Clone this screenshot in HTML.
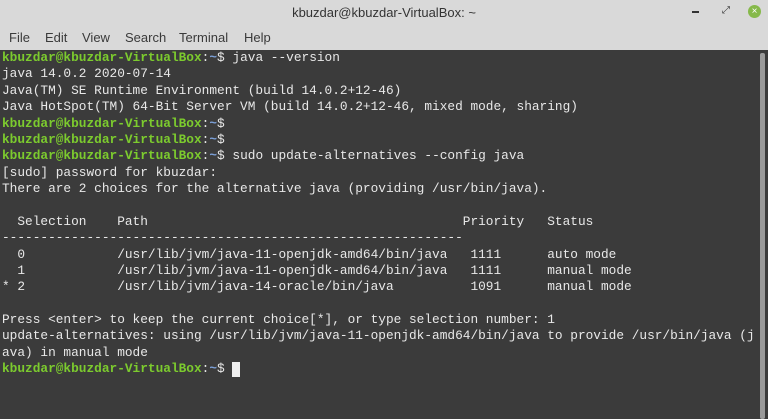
<!DOCTYPE html>
<html><head><style>
html,body{margin:0;padding:0;width:768px;height:419px;overflow:hidden;background:#3b3b3b}
#title{position:absolute;left:0;top:0;width:768px;height:25px;background:#d9d9d9;font:13px "Liberation Sans",sans-serif;color:#333}
#title .t{position:absolute;left:0;width:768px;top:5px;text-align:center}
#menu{position:absolute;left:0;top:25px;width:768px;height:25px;background:#d9d9d9;font:13px "Liberation Sans",sans-serif;color:#3a3a3a}
#menu span{position:absolute;top:5px}
#term{position:absolute;left:2px;top:50px;font:12.8px/16.37px "Liberation Mono",monospace;color:#e8e8e8;white-space:pre}
.g{color:#7ccb2e;font-weight:bold}.b{color:#7b9fd6;font-weight:bold}
#sb{position:absolute;left:760px;top:53px;width:5px;height:366px;background:#9a9a9a;border-radius:2px}
#cur{position:absolute;left:232px;top:362px;width:8px;height:15px;background:#eee}
</style></head><body>
<div id="title"><div class="t">kbuzdar@kbuzdar-VirtualBox: ~</div>
<div style="position:absolute;left:692px;top:11px;width:7px;height:2px;background:#333"></div>
<div style="position:absolute;left:722px;top:7px;width:8px;height:8px;font-size:10px;line-height:8px;color:#333">⤢</div>
<div style="position:absolute;left:748px;top:5px;width:13px;height:13px;border-radius:50%;background:#86b94a;color:#fff;font-size:10px;line-height:13px;text-align:center">×</div>
</div>
<div id="menu"><span style="left:9px">File</span><span style="left:45px">Edit</span><span style="left:82px">View</span><span style="left:125px">Search</span><span style="left:179px">Terminal</span><span style="left:244px">Help</span></div>
<div id="term"><span class="g">kbuzdar@kbuzdar-VirtualBox</span>:<span class="b">~</span>$ java --version
java 14.0.2 2020-07-14
Java(TM) SE Runtime Environment (build 14.0.2+12-46)
Java HotSpot(TM) 64-Bit Server VM (build 14.0.2+12-46, mixed mode, sharing)
<span class="g">kbuzdar@kbuzdar-VirtualBox</span>:<span class="b">~</span>$
<span class="g">kbuzdar@kbuzdar-VirtualBox</span>:<span class="b">~</span>$
<span class="g">kbuzdar@kbuzdar-VirtualBox</span>:<span class="b">~</span>$ sudo update-alternatives --config java
[sudo] password for kbuzdar:
There are 2 choices for the alternative java (providing /usr/bin/java).

  Selection    Path                                         Priority   Status
------------------------------------------------------------
  0            /usr/lib/jvm/java-11-openjdk-amd64/bin/java   1111      auto mode
  1            /usr/lib/jvm/java-11-openjdk-amd64/bin/java   1111      manual mode
* 2            /usr/lib/jvm/java-14-oracle/bin/java          1091      manual mode

Press &lt;enter&gt; to keep the current choice[*], or type selection number: 1
update-alternatives: using /usr/lib/jvm/java-11-openjdk-amd64/bin/java to provide /usr/bin/java (j
ava) in manual mode
<span class="g">kbuzdar@kbuzdar-VirtualBox</span>:<span class="b">~</span>$ </div>
<div id="cur"></div>
<div id="sb"></div>
</body></html>
